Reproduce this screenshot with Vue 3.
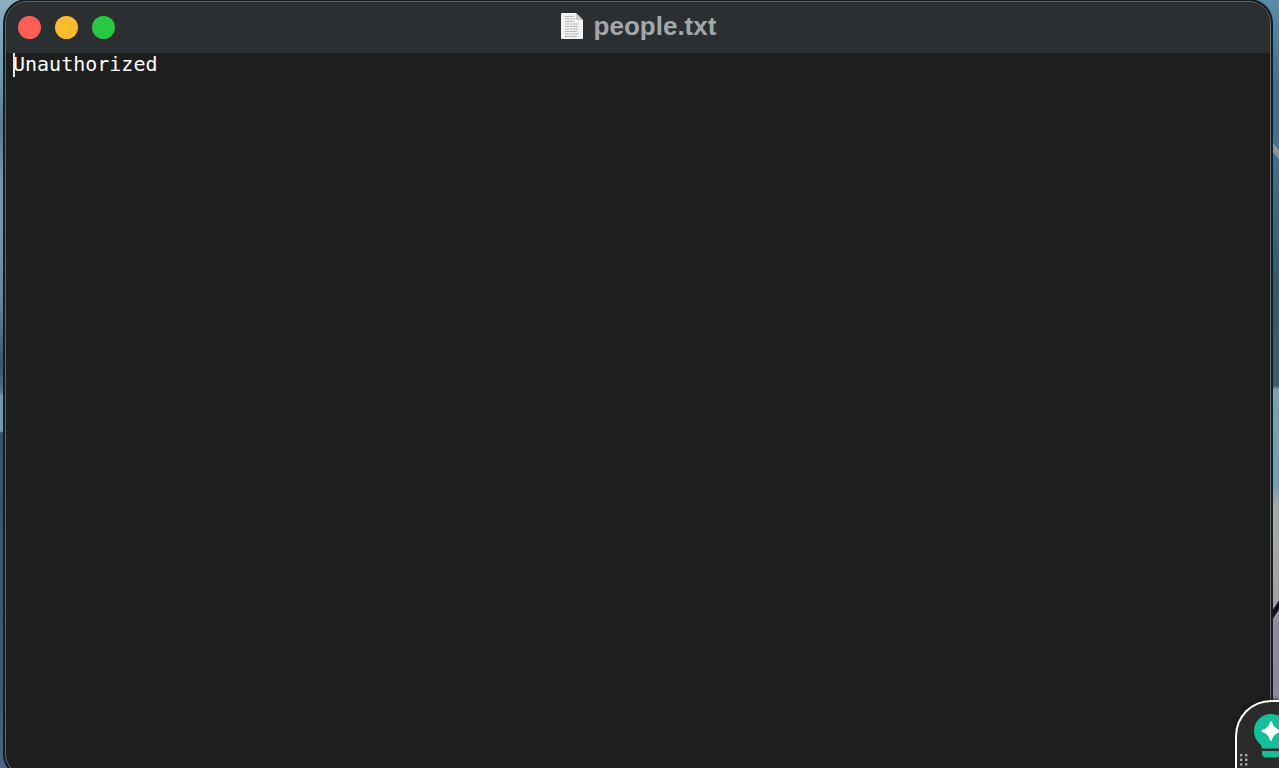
<script setup>
import { ref } from 'vue'

const content = ref('Unauthorized')
const controls = [
  { name: 'Close', tone: 'red' },
  { name: 'Minimize', tone: 'yellow' },
  { name: 'Zoom', tone: 'green' },
]
</script>

<template>
  <div class="desktop">
    <div class="wallpaper left-edge"></div>
    <div class="wallpaper right-edge">
      <svg class="streaks" viewBox="0 0 10 768" preserveAspectRatio="none" aria-hidden="true">
        <path d="M0 143L12 157" stroke="#87979b" stroke-width="6" />
        <path d="M-2 623L14 599" stroke="#10101c" stroke-width="5" />
      </svg>
    </div>

    <main class="window">
      <header class="titlebar">
        <div class="controls">
          <button
            v-for="control in controls"
            :key="control.name"
            type="button"
            class="control"
            :class="control.tone"
            :aria-label="control.name"
          ></button>
        </div>
        <div class="title">
          <svg class="doc" viewBox="0 0 24 28" aria-hidden="true">
            <path d="M2 1h14l7 7v18q0 1-1 1H2q-1 0-1-1V2q0-1 1-1z" fill="#f2f2f2" />
            <path d="M16 1v6q0 1 1 1h6z" fill="#c9cbcc" />
            <path
              d="M5 4.500h9M5 7h10M5 9.500h9M5 12h14M5 14.500h13M5 17h14M5 19.500h12M5 22h14M5 24.500h12"
              stroke="#b4b4b4"
              stroke-width="1"
              stroke-dasharray="4 .6 3 .5 5 .6"
            />
          </svg>
          <h1>people.txt</h1>
        </div>
      </header>
      <div class="editor">
        <textarea v-model="content" aria-label="Document text" spellcheck="false"></textarea>
        <span class="caret"></span>
      </div>
    </main>

    <aside class="assistant">
      <svg class="grip" viewBox="0 0 8 12" aria-hidden="true">
        <g fill="#a6a6a6">
          <rect x="0" y="0" width="2.400" height="2.400" />
          <rect x="5" y="0" width="2.400" height="2.400" />
          <rect x="0" y="4.600" width="2.400" height="2.400" />
          <rect x="5" y="4.600" width="2.400" height="2.400" />
          <rect x="0" y="9.200" width="2.400" height="2.400" />
          <rect x="5" y="9.200" width="2.400" height="2.400" />
        </g>
      </svg>
      <button type="button" class="bulb" aria-label="Open assistant">
        <svg viewBox="0 0 34 44" aria-hidden="true">
          <path
            d="M17 0C7.500 0 0 7.500 0 17c0 6 3 10 6 13 1.500 1.500 1.800 3 2 4.500h18c.2-1.500.5-3 2-4.500 3-3 6-7 6-13C34 7.500 26.500 0 17 0z"
            fill="#16bf9c"
          />
          <path d="M8 37h18v2q0 4.500-4.500 4.500h-9Q8 43.500 8 39z" fill="#16bf9c" />
          <path
            d="M17 8q1.800 7 8.500 9-6.700 2-8.500 9-1.800-7-8.500-9 6.700-2 8.500-9z"
            fill="#fff"
            stroke="#fff"
            stroke-width="2"
            stroke-linejoin="round"
          />
        </svg>
      </button>
    </aside>
  </div>
</template>

<style>
body {
  margin: 0;
  background: #12171b;
}
</style>

<style scoped>
.desktop {
  position: relative;
  display: flex;
  box-sizing: border-box;
  height: 100vh;
  padding: 1px 8px 0 5px;
  overflow: hidden;
  background: #11151b;
}

.wallpaper {
  position: absolute;
  top: 0;
  bottom: 0;
}

.left-edge {
  left: 0;
  width: 24px;
  background: linear-gradient(
    #8dafc2 0,
    #7097ad 80px,
    #587d91 130px,
    #7598ab 180px,
    #7496aa 230px,
    #66889d 300px,
    #35586c 365px,
    #4c7084 390px,
    #7299ad 396px,
    #7299ad 431px,
    #33556a 433px,
    #395d70 700px,
    #4c6486 768px
  );
}

.right-edge {
  right: 0;
  width: 24px;
  background: linear-gradient(
    #5b8cab 0,
    #427091 80px,
    #427091 150px,
    #345a73 280px,
    #385e77 386px,
    #7aa1b9 389px,
    #6e9db5 485px,
    #a6a9a9 505px,
    #a2a1a3 600px,
    #8f899c 625px,
    #8b8597 768px
  );
}

.streaks {
  position: absolute;
  top: 0;
  right: 0;
  width: 10px;
  height: 768px;
}

.window {
  position: relative;
  display: flex;
  flex: 1;
  flex-direction: column;
  box-sizing: border-box;
  margin-bottom: -8px;
  overflow: hidden;
  border: 1px solid #60696d;
  border-radius: 22px;
  background: #1e1e1e;
  box-shadow: 0 0 0 2px #121b22;
}

.titlebar {
  display: grid;
  grid-template-columns: 1fr auto 1fr;
  align-items: center;
  height: 51px;
  background: #2c2f31;
}

.controls {
  display: flex;
  gap: 14px;
  padding-left: 12px;
}

.control {
  width: 23px;
  height: 23px;
  padding: 0;
  border: 0;
  border-radius: 50%;
}

.red {
  background: #ff5f57;
}

.yellow {
  background: #febc2e;
}

.green {
  background: #28c840;
}

.title {
  display: flex;
  gap: 10px;
  align-items: center;
  padding-bottom: 4px;
}

.doc {
  width: 24px;
  height: 28px;
}

h1 {
  margin: 0;
  color: #a3a7a9;
  font: 700 26px/32px "Liberation Sans", Arial, sans-serif;
}

.editor {
  position: relative;
  display: flex;
  flex: 1;
}

textarea {
  flex: 1;
  padding: 0 7px;
  border: 0;
  outline: 0;
  resize: none;
  background: transparent;
  color: #fff;
  font: 20px/22px "DejaVu Sans Mono", monospace;
}

.caret {
  position: absolute;
  top: 0;
  left: 7px;
  width: 2px;
  height: 24px;
  background: #e4e4e4;
}

.assistant {
  position: absolute;
  right: 0;
  bottom: 0;
  display: flex;
  gap: 6px;
  align-items: flex-end;
  box-sizing: border-box;
  width: 44px;
  height: 68px;
  padding-left: 3px;
  overflow: hidden;
  border: 2px solid #fff;
  border-width: 2px 0 0 2px;
  border-radius: 36px 0 0 0;
  background: #2b2b2b;
  box-shadow: 0 0 4px #111;
}

.grip {
  flex: none;
  width: 8px;
  height: 12px;
  margin-bottom: 2px;
}

.bulb {
  flex: none;
  width: 34px;
  height: 44px;
  margin-bottom: 10px;
  padding: 0;
  border: 0;
  background: none;
}

.bulb svg {
  display: block;
  width: 34px;
  height: 44px;
}
</style>
